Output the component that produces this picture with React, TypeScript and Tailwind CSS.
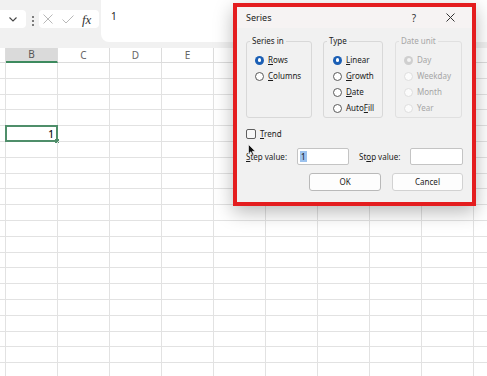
import React from "react";

const COLS = ["B", "C", "D", "E", "F", "G", "H", "I", "J", ""];
const ROWS = Array.from({ length: 20 }, (_, i) => i);

function Radio({ state }: { state: "on" | "off" | "dison" | "disoff" }) {
  if (state === "on")
    return (
      <span className="flex h-[9px] w-[9px] shrink-0 items-center justify-center rounded-full bg-[#1b5fb5]">
        <span className="h-[3.5px] w-[3.5px] rounded-full bg-white" />
      </span>
    );
  if (state === "dison")
    return (
      <span className="flex h-[9px] w-[9px] shrink-0 items-center justify-center rounded-full bg-[#cfcfcf]">
        <span className="h-[4px] w-[4px] rounded-full bg-[#f4f4f4]" />
      </span>
    );
  if (state === "disoff")
    return <span className="h-[9px] w-[9px] shrink-0 rounded-full border border-[#dedede] bg-[#fbfbfb]" />;
  return <span className="h-[9px] w-[9px] shrink-0 rounded-full border border-[#5a5a5a] bg-white" />;
}

function Opt({
  state,
  children,
  disabled,
}: {
  state: "on" | "off" | "dison" | "disoff";
  children: React.ReactNode;
  disabled?: boolean;
}) {
  return (
    <div className="flex h-[16px] items-center gap-[4px]">
      <Radio state={state} />
      <span className={disabled ? "text-[#a6a6a6]" : "text-[#1b1b1b]"}>{children}</span>
    </div>
  );
}

export default function App() {
  return (
    <div className="relative h-[376px] w-[487px] overflow-hidden bg-white font-['Noto_Sans',sans-serif]">
      {/* formula bar */}
      <div className="flex h-[48px] bg-[#f1f1f1]">
        <div className="mt-[10px] flex h-[18px] w-[26px] items-center justify-center rounded-r-[4px] bg-white">
          <svg width="8" height="5" viewBox="0 0 8 5">
            <path d="M0.5 0.5 L4 4 L7.5 0.5" fill="none" stroke="#444" strokeWidth="1.1" />
          </svg>
        </div>
        <div className="flex w-[13px] flex-col items-center justify-center gap-[2px] pb-[10px] pt-[4px]">
          <span className="h-[2px] w-[2px] rounded-full bg-[#555]" />
          <span className="h-[2px] w-[2px] rounded-full bg-[#555]" />
          <span className="h-[2px] w-[2px] rounded-full bg-[#555]" />
        </div>
        <div className="mt-[10px] flex h-[18px] w-[60px] items-center rounded-[4px] bg-white pl-[4px]">
          <svg width="10" height="10" viewBox="0 0 10 10">
            <path d="M0.5 0.5 L9.5 9.5 M9.5 0.5 L0.5 9.5" stroke="#b8b8b8" strokeWidth="1" />
          </svg>
          <svg width="12" height="9" viewBox="0 0 12 9" className="ml-[9px]">
            <path d="M0.5 4.5 L4 8 L11.5 0.5" fill="none" stroke="#b8b8b8" strokeWidth="1" />
          </svg>
          <span className="ml-[8px] font-['Liberation_Serif',serif] text-[13px] italic leading-none text-[#333]">
            fx
          </span>
        </div>
        <div className="ml-[2px] flex h-[42px] flex-1 rounded-bl-[8px] bg-white pl-[10px] pt-[10px]">
          <span className="text-[10px] leading-[12px] text-[#222]">1</span>
        </div>
      </div>

      {/* column headers */}
      <div className="flex h-[15px] bg-white">
        <div className="w-[6px] shrink-0 border-b border-r border-[#dcdcdc]" />
        {COLS.map((c, i) => (
          <div
            key={i}
            className={
              c === "B"
                ? "flex w-[52px] shrink-0 items-center justify-center border-b-2 border-r border-b-[#3d8a5e] border-r-[#dcdcdc] bg-[#dadada] text-[10px] text-[#555]"
                : "flex w-[52px] shrink-0 items-center justify-center border-b border-r border-[#dcdcdc] text-[10px] text-[#666]"
            }
          >
            {c}
          </div>
        ))}
      </div>

      {/* grid */}
      {ROWS.map((r) => (
        <div key={r} className="flex h-[15.8px]">
          <div className="w-[6px] shrink-0 border-b border-r border-[#e2e2e2]" />
          {COLS.map((c, i) => (
            <div key={i} className="relative w-[52px] shrink-0 border-b border-r border-[#e2e2e2]">
              {r === 4 && c === "B" && (
                <>
                  <div className="absolute -left-[1px] -top-[1px] h-[17px] w-[53px] border-2 border-[#4f8e6a]" />
                  <div className="absolute -bottom-[2px] -right-[2px] h-[4px] w-[4px] bg-[#4f8e6a]" />
                  <div className="flex h-full items-center justify-end pr-[3px] text-[10px] font-medium leading-none text-[#111]">
                    1
                  </div>
                </>
              )}
            </div>
          ))}
        </div>
      ))}

      {/* dialog with red annotation frame */}
      <div className="absolute left-[233px] top-[3px] h-[203px] w-[243px] border-4 border-[#e41d1f] shadow-[0_6px_18px_rgba(0,0,0,0.28)]">
        <div className="flex h-full flex-col bg-[#f1f1f1] text-[8px] leading-[10px]">
          {/* title */}
          <div className="flex h-[21px] items-center bg-[#f6f3f3] pl-[9px]">
            <span className="text-[9px] text-[#1b1b1b]">Series</span>
            <span className="ml-auto text-[10px] text-[#333]">?</span>
            <svg width="9" height="9" viewBox="0 0 9 9" className="ml-[30px] mr-[17px]">
              <path d="M0.5 0.5 L8.5 8.5 M8.5 0.5 L0.5 8.5" stroke="#333" strokeWidth="1" />
            </svg>
          </div>

          {/* groups */}
          <div className="mt-[8px] flex pl-[9px]">
            <fieldset className="h-[82px] w-[66px] rounded-[3px] border border-[#d8d8d8] pl-[8px]">
              <legend className="-ml-[5px] px-[2px] leading-[10px] text-[#1b1b1b]">Series in</legend>
              <div className="mt-[6px]">
                <Opt state="on">
                  <span className="underline">R</span>ows
                </Opt>
                <Opt state="off">
                  <span className="underline">C</span>olumns
                </Opt>
              </div>
            </fieldset>
            <fieldset className="ml-[11px] h-[82px] w-[60px] rounded-[3px] border border-[#d8d8d8] pl-[9px]">
              <legend className="-ml-[6px] px-[2px] leading-[10px] text-[#1b1b1b]">Type</legend>
              <div className="mt-[6px]">
                <Opt state="on">
                  <span className="underline">L</span>inear
                </Opt>
                <Opt state="off">
                  <span className="underline">G</span>rowth
                </Opt>
                <Opt state="off">
                  <span className="underline">D</span>ate
                </Opt>
                <Opt state="off">
                  Auto<span className="underline">F</span>ill
                </Opt>
              </div>
            </fieldset>
            <fieldset className="ml-[12px] h-[82px] w-[67px] rounded-[3px] border border-[#e0e0e0] pl-[8px]">
              <legend className="-ml-[5px] px-[2px] leading-[10px] text-[#a6a6a6]">Date unit</legend>
              <div className="mt-[6px]">
                <Opt state="dison" disabled>
                  Day
                </Opt>
                <Opt state="disoff" disabled>
                  Weekday
                </Opt>
                <Opt state="disoff" disabled>
                  Month
                </Opt>
                <Opt state="disoff" disabled>
                  Year
                </Opt>
              </div>
            </fieldset>
          </div>

          {/* trend */}
          <div className="mt-[10px] flex h-[12px] items-center gap-[4px] pl-[9px]">
            <span className="h-[10px] w-[10px] rounded-[2px] border border-[#5f5f5f] bg-[#f7f7f7]" />
            <span className="text-[#1b1b1b]">
              <span className="underline">T</span>rend
            </span>
          </div>

          {/* step / stop */}
          <div className="mt-[8px] flex h-[17px] items-center pl-[9px]">
            <span className="w-[51px] text-[#1b1b1b]">
              <span className="underline">S</span>tep value:
            </span>
            <div className="flex h-[17px] w-[52px] items-center rounded-[2px] border border-[#c4c4c4] bg-white pl-[2px]">
              <span className="bg-[#9cc2ee] px-[1px] leading-[11px] text-[#111]">1</span>
            </div>
            <span className="ml-[10px] w-[51px] text-[#1b1b1b]">
              St<span className="underline">o</span>p value:
            </span>
            <div className="h-[17px] w-[53px] rounded-[2px] border border-[#c4c4c4] bg-white" />
          </div>

          {/* buttons */}
          <div className="mt-[8px] flex h-[18px] justify-end gap-[11px] pr-[9px]">
            <div className="flex w-[72px] items-center justify-center rounded-[3px] border border-[#b9b9b9] bg-[#fdfdfd] text-[#1b1b1b]">
              OK
            </div>
            <div className="flex w-[71px] items-center justify-center rounded-[3px] border border-[#d2d2d2] bg-[#fdfdfd] text-[#1b1b1b]">
              Cancel
            </div>
          </div>
        </div>
      </div>

      {/* mouse cursor */}
      <svg className="absolute left-[248px] top-[144px]" width="8" height="12" viewBox="0 0 8 12">
        <path d="M0.5 0.5 L0.5 10 L2.8 7.8 L4.4 11.3 L5.8 10.7 L4.3 7.3 L7.3 7.3 Z" fill="#111" stroke="#fff" strokeWidth="0.6" />
      </svg>
    </div>
  );
}
